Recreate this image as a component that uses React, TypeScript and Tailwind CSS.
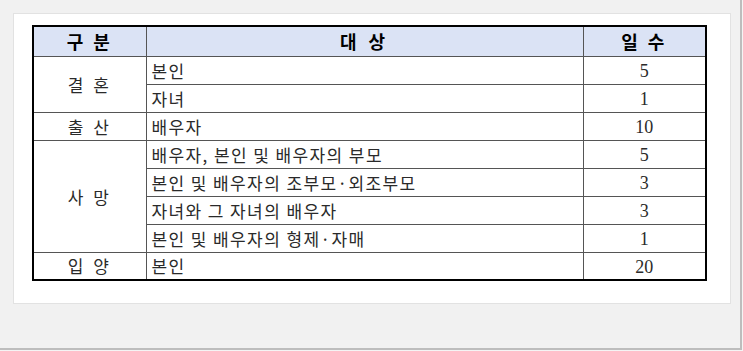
import React from "react";

const ko = { fontFamily: '"Noto Sans CJK KR", "Noto Sans", sans-serif' };
const num = { fontFamily: '"Liberation Serif", "DejaVu Serif", serif' };

function Cell({ children, cls = "" }: { children?: React.ReactNode; cls?: string }) {
  return <td className={`border border-[#555] ${cls}`}>{children}</td>;
}

export default function App() {
  const rows: { cat?: string; span?: number; target: string; days: string }[] = [
    { cat: "결 혼", span: 2, target: "본인", days: "5" },
    { target: "자녀", days: "1" },
    { cat: "출 산", span: 1, target: "배우자", days: "10" },
    { cat: "사 망", span: 4, target: "배우자, 본인 및 배우자의 부모", days: "5" },
    { target: "본인 및 배우자의 조부모·외조부모", days: "3" },
    { target: "자녀와 그 자녀의 배우자", days: "3" },
    { target: "본인 및 배우자의 형제·자매", days: "1" },
    { cat: "입 양", span: 1, target: "본인", days: "20" },
  ];
  return (
    <div className="w-[743px] h-[351px] bg-[#f4f4f4]">
      <div className="w-[742px] h-[350px] border-r-2 border-b-2 border-[#bdbdbd] bg-[#f1f1f1] pt-[13px] pl-[13px]">
        <div className="w-[718px] h-[291px] bg-white border border-[#e2e2e2] pt-[11px] pl-[18px]">
          <table className="border-collapse border-2 border-black text-[#2a2a2a]" style={ko}>
            <colgroup>
              <col className="w-[113px]" />
              <col className="w-[437px]" />
              <col className="w-[123px]" />
            </colgroup>
            <thead>
              <tr className="h-[30px] bg-[#dbe3f5] text-[18px] text-black font-semibold">
                <Cell cls="text-center leading-none tracking-[3px]">구 분</Cell>
                <Cell cls="text-center leading-none tracking-[4px]">대 상</Cell>
                <Cell cls="text-center leading-none tracking-[3px]">일 수</Cell>
              </tr>
            </thead>
            <tbody className="text-[17px] tracking-[1.4px]">
              {rows.map((r, i) => (
                <tr key={i} className="h-[28px]">
                  {r.cat && (
                    <td rowSpan={r.span} className="border border-[#555] text-center leading-none tracking-[3px]">
                      {r.cat}
                    </td>
                  )}
                  <Cell cls="pl-[5px] leading-none">{r.target}</Cell>
                  <Cell cls="text-center leading-none text-[18px] tracking-normal">
                    <span style={num}>{r.days}</span>
                  </Cell>
                </tr>
              ))}
            </tbody>
          </table>
        </div>
      </div>
    </div>
  );
}
